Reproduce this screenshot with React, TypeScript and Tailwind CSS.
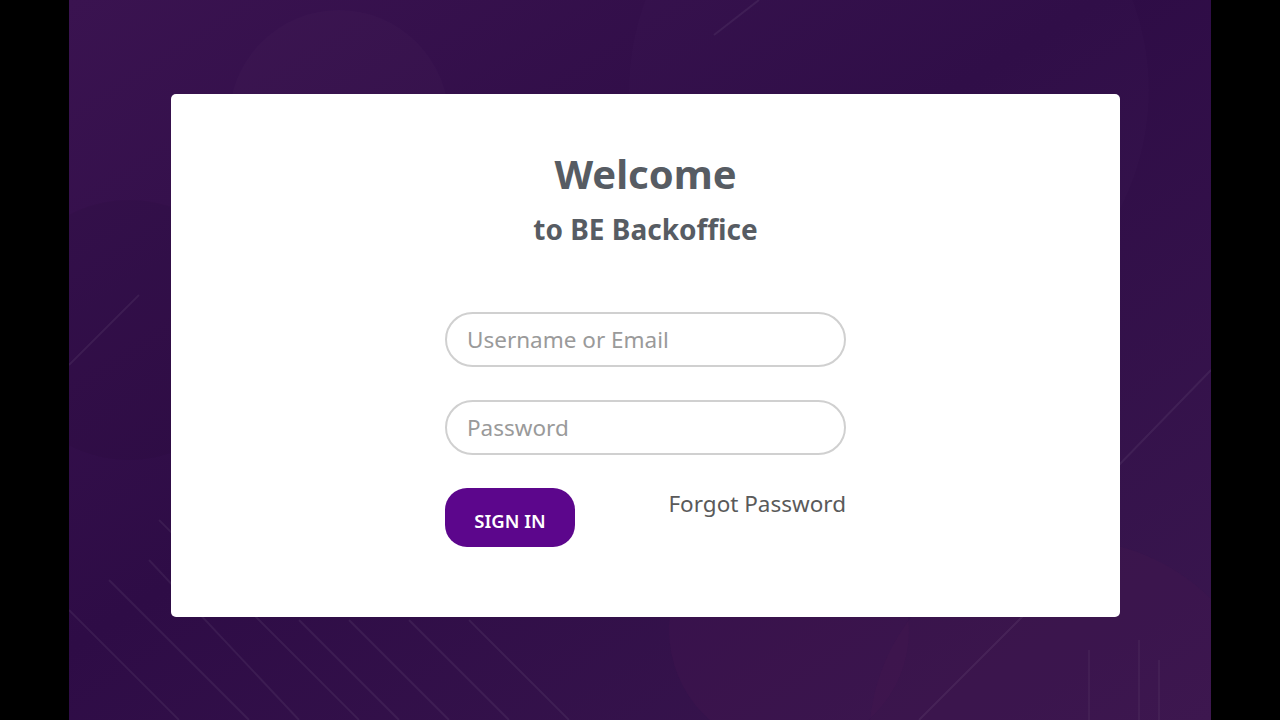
import React from "react";

function Backdrop() {
  return (
    <svg
      className="absolute inset-0 h-full w-full"
      viewBox="0 0 1142 720"
      preserveAspectRatio="none"
      aria-hidden="true"
    >
      <defs>
        <linearGradient id="bg" x1="0" y1="0" x2="1" y2="1">
          <stop offset="0" stopColor="#3a1350" />
          <stop offset="0.45" stopColor="#2e0c46" />
          <stop offset="1" stopColor="#3a174f" />
        </linearGradient>
      </defs>
      <rect width="1142" height="720" fill="url(#bg)" />
      <circle cx="270" cy="120" r="110" fill="#ffffff" opacity="0.015" />
      <circle cx="820" cy="90" r="260" fill="#ffffff" opacity="0.012" />
      <circle cx="60" cy="330" r="130" fill="#000000" opacity="0.04" />
      <circle cx="720" cy="630" r="120" fill="#5a1a5a" opacity="0.15" />
      <circle cx="1000" cy="740" r="200" fill="#4a1850" opacity="0.2" />
      <g stroke="#ffffff" strokeOpacity="0.06" strokeWidth="2">
        <line x1="0" y1="365" x2="70" y2="295" />
        <line x1="645" y1="35" x2="690" y2="0" />
        <line x1="1050" y1="465" x2="1142" y2="370" />
        <line x1="850" y1="720" x2="960" y2="610" />
        <line x1="80" y1="560" x2="230" y2="720" />
        <line x1="40" y1="580" x2="180" y2="720" />
        <line x1="0" y1="610" x2="110" y2="720" />
        <line x1="90" y1="520" x2="290" y2="720" />
        <line x1="230" y1="620" x2="330" y2="720" />
        <line x1="280" y1="620" x2="380" y2="720" />
        <line x1="340" y1="620" x2="440" y2="720" />
        <line x1="400" y1="620" x2="500" y2="720" />
      </g>
      <g stroke="#ffffff" strokeOpacity="0.04" strokeWidth="2">
        <line x1="1020" y1="650" x2="1020" y2="720" />
        <line x1="1070" y1="640" x2="1070" y2="720" />
        <line x1="1090" y1="660" x2="1090" y2="720" />
      </g>
    </svg>
  );
}

export default function App() {
  const font = { fontFamily: '"Noto Sans", "Open Sans", sans-serif' };
  return (
    <div className="flex h-[720px] w-[1280px] bg-black" style={font}>
      <div className="w-[69px] shrink-0" />
      <div className="relative flex-1 overflow-hidden">
        <Backdrop />
        <div className="relative pl-[102px] pt-[94px]">
          <div className="flex h-[523px] w-[949px] flex-col items-center rounded-[5px] bg-white pt-[56px]">
            <h1 className="text-[40px] leading-[48px] font-bold text-[#575c63]">Welcome</h1>
            <h2 className="mt-[13px] text-[28px] leading-[36px] font-bold text-[#575c63]">to BE Backoffice</h2>

            <form className="mt-[65px] flex w-[401px] flex-col">
              <input
                type="text"
                placeholder="Username or Email"
                className="h-[55px] w-full rounded-full border-2 border-[#d0d0d0] px-[20px] text-[22.5px] text-[#555] placeholder:text-[#9a9a9a] outline-none"
              />
              <input
                type="password"
                placeholder="Password"
                className="mt-[33px] h-[55px] w-full rounded-full border-2 border-[#d0d0d0] px-[20px] text-[22.5px] text-[#555] placeholder:text-[#9a9a9a] outline-none"
              />
              <div className="mt-[33px] flex items-start justify-between">
                <button
                  type="button"
                  className="h-[59px] w-[130px] rounded-[22px] bg-[#5c068c] pt-[6px] text-[18.5px] font-semibold text-white"
                >
                  SIGN IN
                </button>
                <a className="mt-[1px] text-[22.5px] leading-[30px] text-[#5a5a5a]">Forgot Password</a>
              </div>
            </form>
          </div>
        </div>
      </div>
      <div className="w-[69px] shrink-0" />
    </div>
  );
}
